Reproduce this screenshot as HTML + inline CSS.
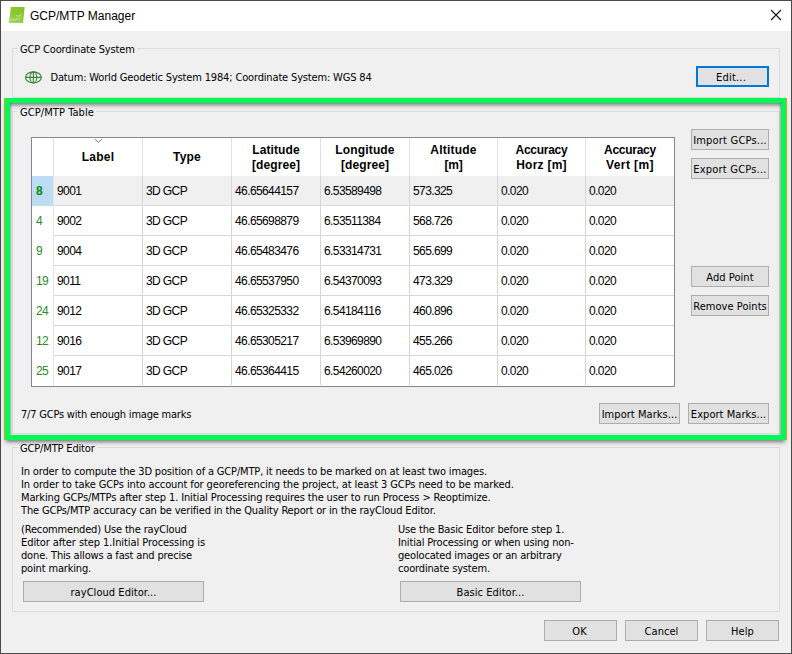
<!DOCTYPE html>
<html lang="en">
<head>
<meta charset="utf-8">
<title>GCP/MTP Manager</title>
<style>
html,body{margin:0;padding:0;}
body{width:792px;height:654px;overflow:hidden;background:#f0f0f0;position:relative;
  font-family:"DejaVu Sans Condensed","Liberation Sans",sans-serif;font-size:11px;color:#000;letter-spacing:-0.16px;}
.abs{position:absolute;white-space:nowrap;}
#win{position:absolute;left:0;top:0;width:790px;height:652px;border:1px solid #4a4a4a;background:#f0f0f0;}
#titlebar{position:absolute;left:1px;top:1px;width:790px;height:30px;background:#fff;}
#title{position:absolute;left:29px;top:8px;font-family:"Liberation Sans",sans-serif;font-size:12px;letter-spacing:0;line-height:14px;white-space:nowrap;}
.gb{position:absolute;border:1px solid #dcdcdc;box-sizing:border-box;}
.gbl{position:absolute;background:#f0f0f0;padding:0 2px;line-height:13px;white-space:nowrap;}
.btn{position:absolute;box-sizing:border-box;border:1px solid #adadad;background:#e1e1e1;text-align:center;line-height:21px;height:21px;white-space:nowrap;letter-spacing:0.05px;}
.btn.focus{border:2px solid #0078d7;line-height:19px;}
.t{position:absolute;white-space:nowrap;line-height:13px;}
/* table */
#tbl{position:absolute;left:31px;top:137px;width:644px;height:250px;box-sizing:border-box;border:1px solid #828790;background:#fff;
  font-family:"Liberation Sans",sans-serif;font-size:12px;letter-spacing:-0.6px;}
.hc{position:absolute;top:0;height:38px;border-right:1px solid #e0e0e0;box-sizing:border-box;font-weight:bold;text-align:center;line-height:15px;letter-spacing:-0.15px;}
.row{position:absolute;left:0;width:642px;height:30px;box-sizing:border-box;border-bottom:1px solid #d8d8d8;}
.row.sel{background:#f0f0f0;border-bottom-color:#d8d8d8;}
.c{position:absolute;top:0;height:29px;line-height:31px;box-sizing:border-box;border-right:1px solid #d6d6d6;padding-left:3px;}
.rh{position:absolute;left:0;top:0;width:22px;height:30px;background:#fff;z-index:1;line-height:31px;box-sizing:border-box;border-right:1px solid #e4e4e4;color:#2a8a2a;text-align:left;padding-left:4px;}
.row.sel .rh{background:#bcdcf4;font-weight:bold;color:#0a8a0a;height:30px;}
#hl{position:absolute;left:5px;top:98px;width:781px;height:342px;box-sizing:border-box;border:5px solid #00f955;
  box-shadow:0 3px 4px -1px rgba(0,0,0,.5), inset 0 3px 4px -1px rgba(0,0,0,.5), inset 2px 0 2px -1px rgba(0,0,0,.18), inset -2px 0 2px -1px rgba(0,0,0,.18);}
#hl:before{content:"";position:absolute;left:-6px;top:-5px;width:1px;height:342px;background:#d9a520;}
#hl:after{content:"";position:absolute;left:776px;top:-5px;width:1px;height:342px;background:#d9a520;}
</style>
</head>
<body>
<div id="win"></div>
<div id="titlebar">
  <svg class="abs" style="left:7px;top:6px" width="18" height="17" viewBox="0 0 18 17">
    <defs><linearGradient id="g1" x1="0.7" y1="0" x2="0.2" y2="1"><stop offset="0" stop-color="#86c22c"/><stop offset="0.55" stop-color="#8fc83a"/><stop offset="1" stop-color="#a6d662"/></linearGradient></defs>
    <polygon points="2.9,0.1 16.7,0.1 15,16 0.8,16" fill="url(#g1)"/>
    <path d="M2 14.5 L5 11.5 L7 13.5 L9 11 L11 13 L13 9.5" stroke="#d4ecb4" stroke-width="1" fill="none" opacity=".75"/>
    <path d="M8 8.5 L10.5 9.5 L13.5 7" stroke="#dff2c8" stroke-width=".9" fill="none" opacity=".8"/>
  </svg>
  <div id="title">GCP/MTP Manager</div>
  <svg class="abs" style="left:769px;top:8px" width="12" height="12" viewBox="0 0 12 12"><path d="M1 1 L11 11 M11 1 L1 11" stroke="#111" stroke-width="1.1" fill="none"/></svg>
</div>

<!-- Group: GCP Coordinate System -->
<div class="gb" style="left:12px;top:48px;width:768px;height:50px"></div>
<div class="gbl" style="left:18px;top:43px">GCP Coordinate System</div>
<svg class="abs" style="left:24px;top:70px" width="19" height="15" viewBox="0 0 19 15">
  <g fill="none" stroke="#3b873b" stroke-width="1.15">
    <ellipse cx="9.4" cy="7.4" rx="7.9" ry="5.5"/>
    <ellipse cx="9.4" cy="7.4" rx="3.4" ry="5.5"/>
    <path d="M1.5 7.4 H17.3 M9.4 1.9 V12.9"/>
  </g>
</svg>
<div class="t" style="left:50.5px;top:71px">Datum: World Geodetic System 1984; Coordinate System: WGS 84</div>
<div class="btn focus" style="left:696px;top:66px;width:73px;letter-spacing:0.2px;padding-right:3px">Edit...</div>

<!-- Group: GCP/MTP Table -->
<div class="gb" style="left:12px;top:111px;width:768px;height:323px"></div>
<div class="gbl" style="left:18px;top:106px;letter-spacing:0.07px">GCP/MTP Table</div>

<div id="tbl">
  <div class="hc" style="left:0;width:22px"></div>
  <div class="hc" style="left:22px;width:89px;padding-top:12px"><span style="letter-spacing:0.25px">Label</span></div>
  <div class="hc" style="left:111px;width:89px;padding-top:12px"><span style="letter-spacing:0.2px">Type</span></div>
  <div class="hc" style="left:200px;width:89px;padding-top:5px"><span style="letter-spacing:0.1px">Latitude</span><br><span style="letter-spacing:0.1px">[degree]</span></div>
  <div class="hc" style="left:289px;width:89px;padding-top:5px"><span style="letter-spacing:0.15px">Longitude</span><br><span style="letter-spacing:0.1px">[degree]</span></div>
  <div class="hc" style="left:378px;width:88px;padding-top:5px"><span style="letter-spacing:0.2px">Altitude</span><br>[m]</div>
  <div class="hc" style="left:466px;width:88px;padding-top:5px"><span style="letter-spacing:-0.27px">Accuracy</span><br><span style="letter-spacing:0.25px">Horz [m]</span></div>
  <div class="hc" style="left:554px;width:88px;padding-top:5px;border-right:none"><span style="letter-spacing:-0.27px">Accuracy</span><br><span style="letter-spacing:0.4px">Vert [m]</span></div>
  <svg class="abs" style="left:62px;top:0px" width="9" height="6" viewBox="0 0 9 6"><path d="M1 1 L4.5 4.5 L8 1" stroke="#8c8c8c" stroke-width="1" fill="none"/></svg>

  <div class="row sel" style="top:38px"><div class="rh">8</div><div class="c" style="left:22px;width:89px">9001</div><div class="c" style="left:111px;width:89px">3D GCP</div><div class="c" style="left:200px;width:89px">46.65644157</div><div class="c" style="left:289px;width:89px">6.53589498</div><div class="c" style="left:378px;width:88px">573.325</div><div class="c" style="left:466px;width:88px">0.020</div><div class="c" style="left:554px;width:88px;border-right:none">0.020</div></div>
  <div class="row" style="top:68px"><div class="rh">4</div><div class="c" style="left:22px;width:89px">9002</div><div class="c" style="left:111px;width:89px">3D GCP</div><div class="c" style="left:200px;width:89px">46.65698879</div><div class="c" style="left:289px;width:89px">6.53511384</div><div class="c" style="left:378px;width:88px">568.726</div><div class="c" style="left:466px;width:88px">0.020</div><div class="c" style="left:554px;width:88px;border-right:none">0.020</div></div>
  <div class="row" style="top:98px"><div class="rh">9</div><div class="c" style="left:22px;width:89px">9004</div><div class="c" style="left:111px;width:89px">3D GCP</div><div class="c" style="left:200px;width:89px">46.65483476</div><div class="c" style="left:289px;width:89px">6.53314731</div><div class="c" style="left:378px;width:88px">565.699</div><div class="c" style="left:466px;width:88px">0.020</div><div class="c" style="left:554px;width:88px;border-right:none">0.020</div></div>
  <div class="row" style="top:128px"><div class="rh">19</div><div class="c" style="left:22px;width:89px">9011</div><div class="c" style="left:111px;width:89px">3D GCP</div><div class="c" style="left:200px;width:89px">46.65537950</div><div class="c" style="left:289px;width:89px">6.54370093</div><div class="c" style="left:378px;width:88px">473.329</div><div class="c" style="left:466px;width:88px">0.020</div><div class="c" style="left:554px;width:88px;border-right:none">0.020</div></div>
  <div class="row" style="top:158px"><div class="rh">24</div><div class="c" style="left:22px;width:89px">9012</div><div class="c" style="left:111px;width:89px">3D GCP</div><div class="c" style="left:200px;width:89px">46.65325332</div><div class="c" style="left:289px;width:89px">6.54184116</div><div class="c" style="left:378px;width:88px">460.896</div><div class="c" style="left:466px;width:88px">0.020</div><div class="c" style="left:554px;width:88px;border-right:none">0.020</div></div>
  <div class="row" style="top:188px"><div class="rh">12</div><div class="c" style="left:22px;width:89px">9016</div><div class="c" style="left:111px;width:89px">3D GCP</div><div class="c" style="left:200px;width:89px">46.65305217</div><div class="c" style="left:289px;width:89px">6.53969890</div><div class="c" style="left:378px;width:88px">455.266</div><div class="c" style="left:466px;width:88px">0.020</div><div class="c" style="left:554px;width:88px;border-right:none">0.020</div></div>
  <div class="row" style="top:218px;border-bottom:none"><div class="rh">25</div><div class="c" style="left:22px;width:89px">9017</div><div class="c" style="left:111px;width:89px">3D GCP</div><div class="c" style="left:200px;width:89px">46.65364415</div><div class="c" style="left:289px;width:89px">6.54260020</div><div class="c" style="left:378px;width:88px">465.026</div><div class="c" style="left:466px;width:88px">0.020</div><div class="c" style="left:554px;width:88px;border-right:none">0.020</div></div>
</div>

<div class="btn" style="left:691px;top:129px;width:78px;letter-spacing:.2px">Import GCPs...</div>
<div class="btn" style="left:691px;top:158px;width:78px;letter-spacing:.2px">Export GCPs...</div>
<div class="btn" style="left:691px;top:266px;width:78px">Add Point</div>
<div class="btn" style="left:691px;top:295px;width:78px">Remove Points</div>
<div class="t" style="left:21px;top:408px;letter-spacing:-0.21px">7/7 GCPs with enough image marks</div>
<div class="btn" style="left:599px;top:403px;width:81px">Import Marks...</div>
<div class="btn" style="left:688px;top:403px;width:81px">Export Marks...</div>

<!-- Group: GCP/MTP Editor -->
<div class="gb" style="left:12px;top:447px;width:768px;height:165px"></div>
<div class="gbl" style="left:18px;top:442px">GCP/MTP Editor</div>
<div class="t" style="left:21px;top:465px">In order to compute the 3D position of a GCP/MTP, it needs to be marked on at least two images.<br><span style="letter-spacing:-0.1px">In order to take GCPs into account for georeferencing the project, at least 3 GCPs need to be marked.</span><br><span style="letter-spacing:-0.12px">Marking GCPs/MTPs after step 1. Initial Processing requires the user to run Process &gt; Reoptimize.</span><br>The GCPs/MTP accuracy can be verified in the Quality Report or in the rayCloud Editor.</div>
<div class="t" style="left:21px;top:523px">(Recommended) Use the rayCloud<br><span style="letter-spacing:-0.08px">Editor after step 1.Initial Processing is</span><br>done. This allows a fast and precise<br>point marking.</div>
<div class="t" style="left:398px;top:523px">Use the Basic Editor before step 1.<br>Initial Processing or when using non-<br>geolocated images or an arbitrary<br>coordinate system.</div>
<div class="btn" style="left:23px;top:581px;width:181px">rayCloud Editor...</div>
<div class="btn" style="left:400px;top:581px;width:181px">Basic Editor...</div>

<div class="btn" style="left:544px;top:620px;width:73px;padding-right:2px">OK</div>
<div class="btn" style="left:625px;top:620px;width:73px">Cancel</div>
<div class="btn" style="left:706px;top:620px;width:73px">Help</div>

<div id="hl"></div>
</body>
</html>
